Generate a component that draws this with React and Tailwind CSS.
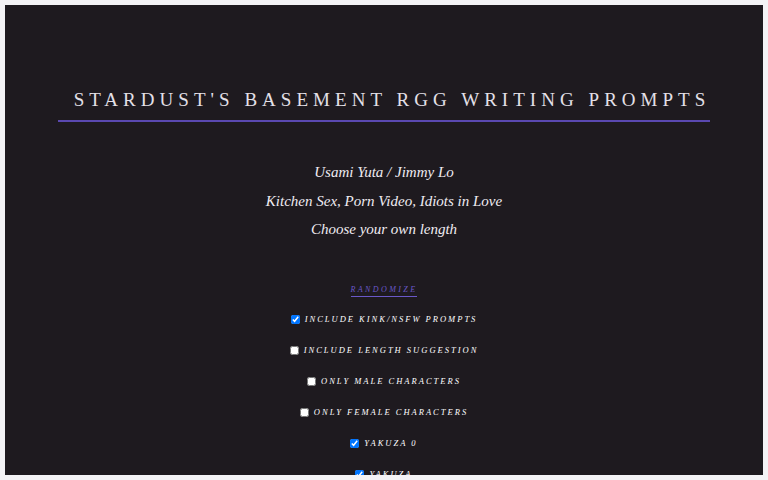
import React, { useState } from 'react';

const options = [
    { id: 'kink', label: 'Include kink/nsfw prompts', checked: true },
    { id: 'length', label: 'Include length suggestion', checked: false },
    { id: 'male', label: 'Only male characters', checked: false },
    { id: 'female', label: 'Only female characters', checked: false },
    { id: 'yakuza0', label: 'Yakuza 0', checked: true },
    { id: 'yakuza1', label: 'Yakuza', checked: true },
];

const App = () => {
    const [checked, setChecked] = useState(() =>
        Object.fromEntries(options.map((o) => [o.id, o.checked]))
    );

    const toggle = (id) => setChecked((prev) => ({ ...prev, [id]: !prev[id] }));

    return (
        <div className="h-screen bg-[#f4f3f6] p-[5px]" style={{ fontFamily: '"Liberation Serif", "DejaVu Serif", serif' }}>
            <div className="h-full overflow-hidden bg-[#1e1a1f] text-[#ebe7ee]">
                {/* Page heading */}
                <div className="pt-[81px] px-[53px]">
                    <h1 className="flex justify-center text-[19px] leading-[28px] uppercase tracking-[0.265em] text-[#e4e0e8]">
                        <span className="ml-[16px] whitespace-nowrap">Stardust's Basement RGG Writing Prompts</span>
                    </h1>
                    <div className="mt-[6px] h-[2px] bg-[#5a48b0]" />
                </div>

                {/* Current prompt */}
                <div className="mt-[36px] flex flex-col items-center italic text-[15px] leading-[28.5px] text-[#f0ecf2]">
                    <p>Usami Yuta / Jimmy Lo</p>
                    <p>Kitchen Sex, Porn Video, Idiots in Love</p>
                    <p>Choose your own length</p>
                </div>

                {/* Controls */}
                <div className="mt-[41px] flex flex-col items-center">
                    <button className="italic uppercase text-[8px] tracking-[0.3em] text-[#6a58c8] border-b border-[#6a58c8] leading-[10px] pb-[1px]">
                        Randomize
                    </button>
                    <div className="mt-[17px] flex flex-col items-center gap-[19px]">
                        {options.map((o) => (
                            <label key={o.id} className="flex items-center gap-[5px] h-[12px] italic uppercase text-[8.5px] tracking-[0.235em] text-white">
                                <input
                                    type="checkbox"
                                    className="w-[9px] h-[9px] m-0"
                                    checked={checked[o.id]}
                                    onChange={() => toggle(o.id)}
                                />
                                <span>{o.label}</span>
                            </label>
                        ))}
                    </div>
                </div>
            </div>
        </div>
    );
};

export default App;
